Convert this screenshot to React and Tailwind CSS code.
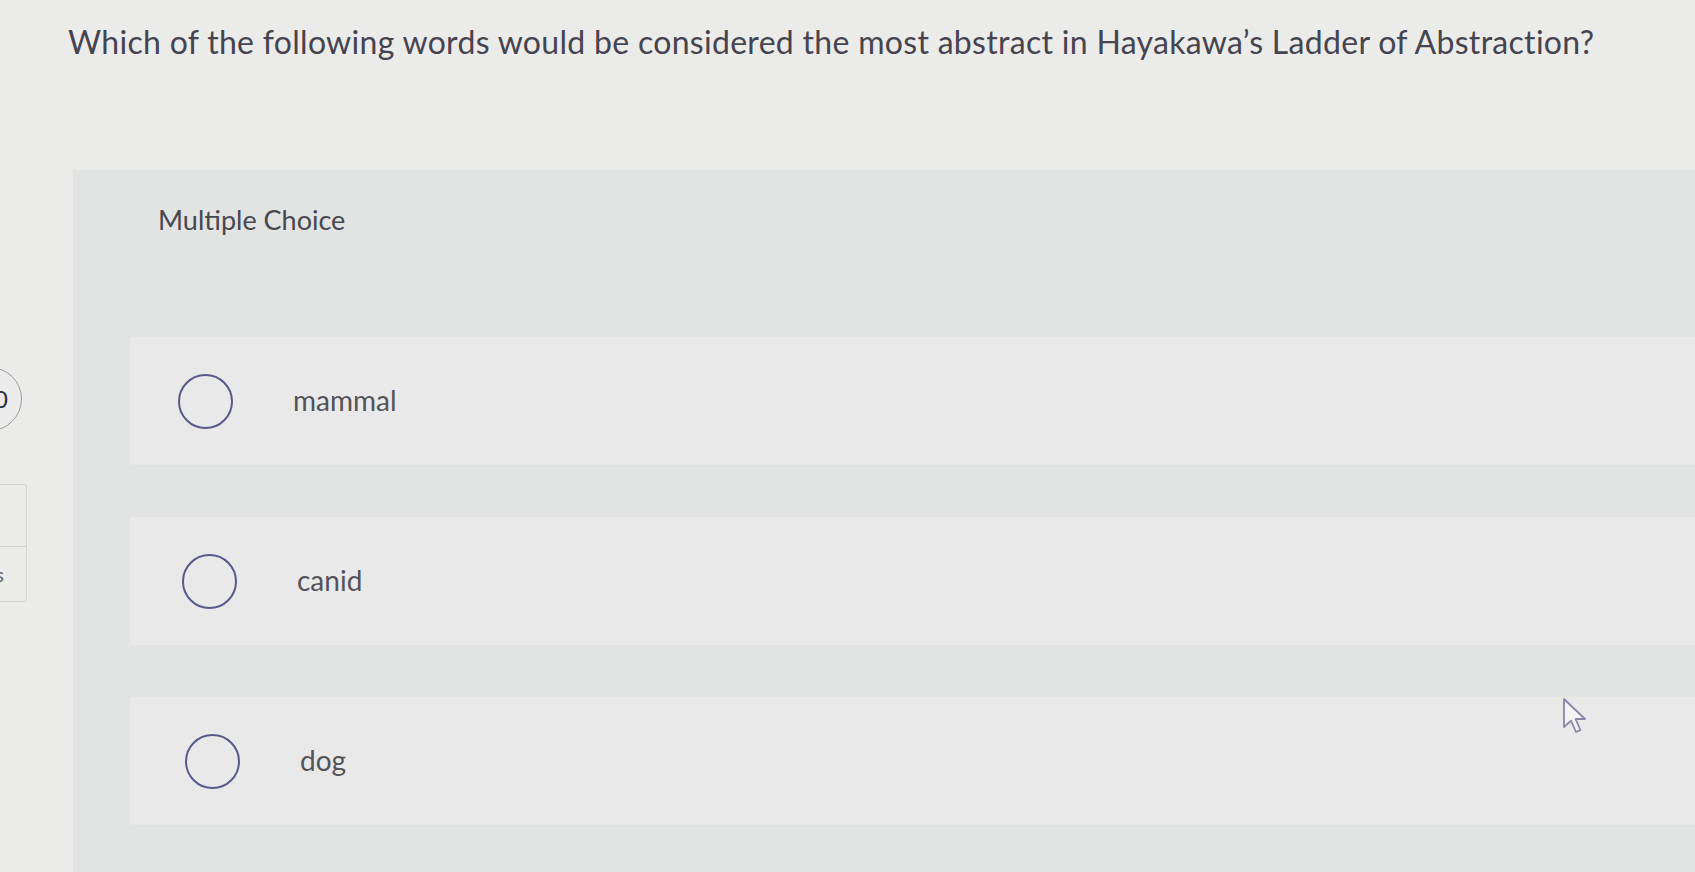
import React from "react";

const options = [
  { label: "mammal", pad: "pl-[48px]" },
  { label: "canid", pad: "pl-[52px]" },
  { label: "dog", pad: "pl-[55px]" },
];

function Radio() {
  return <span className="w-[55px] h-[55px] rounded-full border-[2.5px] border-[#585a8c] shrink-0" />;
}

function Cursor() {
  return (
    <svg width="26" height="38" viewBox="0 0 13 19" className="absolute left-[1562px] top-[697px]">
      <path
        d="M1 1 L1 15 L4.5 11.8 L7 17.5 L9.2 16.5 L6.8 11 L11.5 11 Z"
        fill="#f4f4f6"
        stroke="#8a86a8"
        strokeWidth="0.9"
        strokeLinejoin="round"
      />
    </svg>
  );
}

export default function App() {
  return (
    <div className="relative w-[1695px] h-[872px] overflow-hidden bg-[#ebebea] font-['Lato',sans-serif]">
      {/* cut-off sidebar bits at the left edge */}
      <div className="absolute left-[-42px] top-[367px] w-[64px] h-[64px] rounded-full border border-[#9c9c9c] bg-[#ececec] flex items-center justify-end pr-[13px] text-[24px] text-[#2f3140]">
        0
      </div>
      <div className="absolute left-[-20px] top-[484px] w-[47px] h-[118px] rounded-[3px] border border-[#d2d2d2] flex flex-col">
        <div className="h-[62px] border-b border-[#d2d2d2]" />
        <div className="flex-1 flex items-center justify-end pr-[22px] text-[20px] text-[#666]">s</div>
      </div>

      <div className="pl-[68px] pt-[22px] h-[170px]">
        <h1 className="text-[32px] leading-[40px] text-[#45444f] tracking-[0.3px]">
          Which of the following words would be considered the most abstract in Hayakawa’s Ladder of Abstraction?
        </h1>
      </div>

      <div className="ml-[73px] bg-[#e2e3e3] h-[702px]">
        <div className="pl-[85px] pt-[33px] h-[167px] text-[27px] leading-[34px] text-[#48484e]">Multiple Choice</div>
        <div className="ml-[57px] flex flex-col gap-[52px]">
          {options.map((o) => (
            <div key={o.label} className={`h-[128px] bg-[#e9e9e9] flex items-center gap-[60px] ${o.pad}`}>
              <Radio />
              <span className="text-[28px] text-[#535359] pb-[2px]">{o.label}</span>
            </div>
          ))}
        </div>
      </div>

      <Cursor />
    </div>
  );
}
